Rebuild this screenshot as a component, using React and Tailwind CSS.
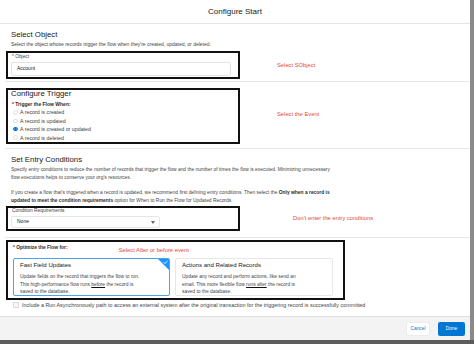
export default function App() {
  const font = { fontFamily: '"Liberation Sans", Arial, sans-serif' };
  const Radio = ({ checked, label }) => (
    <div className="flex items-center h-[8.4px] pl-[5px] gap-[2.5px]">
      <span
        className={
          "w-[4.5px] h-[4.5px] rounded-full border-[0.5px] flex items-center justify-center " +
          (checked ? "border-[#0176d3]" : "border-[#e0e0e0]")
        }
      >
        {checked && <span className="w-[2.5px] h-[2.5px] rounded-full bg-[#0176d3]" />}
      </span>
      <span className="text-[5.3px] leading-[8px] text-[#3e3e3c] whitespace-nowrap">{label}</span>
    </div>
  );
  return (
    <div className="w-[474px] h-[344px] bg-[#5c5c5c] overflow-hidden" style={font}>
      <div className="flex h-[340px]">
        <div className="w-[470px] bg-white flex flex-col">
          {/* header */}
          <div className="h-[24px] border-b border-[#e5e5e5] flex items-center justify-center text-[8px] text-[#181818]">
            Configure Start
          </div>

          <div className="flex-1 flex flex-col">
            {/* Section 1 */}
            <div className="pl-[6px] pt-[6px]">
              <div className="pl-[5px] text-[7.8px] leading-[10px] text-[#181818]">Select Object</div>
              <div className="pl-[5px] mt-[1px] text-[5px] leading-[7px] text-[#444] whitespace-nowrap">
                Select the object whose records trigger the flow when they're created, updated, or deleted.
              </div>
              <div className="flex items-center mt-[3px]">
                <div className="w-[234px] h-[28px] border-2 border-[#111] pl-[3px] pt-[1px]">
                  <div className="pl-[1px] text-[4.8px] leading-[6px] text-[#444]">
                    <span className="text-[#ba0517]">*</span> Object
                  </div>
                  <div className="mt-[2px] w-[220px] h-[14px] border-[0.5px] border-[#e3e3e3] rounded-[2px] pl-[5px] flex items-center text-[5px] text-[#181818]">
                    Account
                  </div>
                </div>
                <div className="ml-[37px] text-[5.8px] text-[#e4473c] whitespace-nowrap">Select SObject</div>
              </div>
            </div>
            <div className="ml-[5px] mt-[2px] h-px bg-[#e8e8e8]" />

            {/* Section 2 */}
            <div className="pl-[6px] mt-[6px] flex items-start">
              <div className="w-[234px] h-[56px] border-2 border-[#111] overflow-hidden">
                <div className="pl-[3px] text-[7.8px] leading-[7px] text-[#181818]">Configure Trigger</div>
                <div className="pl-[4px] mt-[4px] text-[5px] leading-[6px] text-[#2b2b2b] font-bold">
                  <span className="text-[#ba0517]">*</span> Trigger the Flow When:
                </div>
                <div className="mt-[1.2px]">
                  <Radio label="A record is created" />
                  <Radio label="A record is updated" />
                  <Radio checked label="A record is created or updated" />
                  <Radio label="A record is deleted" />
                </div>
              </div>
              <div className="ml-[37px] mt-[22px] text-[5.8px] text-[#e4473c] whitespace-nowrap">Select the Event</div>
            </div>
            <div className="ml-[5px] mt-[4px] h-px bg-[#e8e8e8]" />

            {/* Section 3 */}
            <div className="pl-[6px] mt-[6px]">
              <div className="pl-[5px] text-[7.8px] leading-[10px] text-[#181818]">Set Entry Conditions</div>
              <div className="pl-[5px] mt-[1px] text-[4.9px] leading-[8px] text-[#444] whitespace-nowrap">
                Specify entry conditions to reduce the number of records that trigger the flow and the number of times the flow is executed. Minimizing unnecessary
                <br />
                flow executions helps to conserve your org's resources.
              </div>
              <div className="pl-[5px] mt-[7px] text-[4.9px] leading-[8px] text-[#444] whitespace-nowrap">
                If you create a flow that's triggered when a record is updated, we recommend first defining entry conditions. Then select the{" "}
                <b className="text-[#2b2b2b]">Only when a record is</b>
                <br />
                <b className="text-[#2b2b2b]">updated to meet the condition requirements</b> option for When to Run the Flow for Updated Records.
              </div>
              <div className="flex items-center mt-[1px]">
                <div className="w-[234px] h-[25px] border-2 border-[#111] pl-[3px]">
                  <div className="pl-[1px] text-[4.9px] leading-[6px] text-[#444]">Condition Requirements</div>
                  <div className="mt-[2px] w-[149px] h-[12px] border-[0.5px] border-[#e6e6e6] rounded-[2px] pl-[5px] pr-[4px] flex items-center justify-between text-[5px] text-[#181818]">
                    <span>None</span>
                    <svg width="4" height="3" viewBox="0 0 4 3">
                      <path d="M0 0 L4 0 L2 3 Z" fill="#666" />
                    </svg>
                  </div>
                </div>
                <div className="ml-[53px] text-[5.8px] text-[#e4473c] whitespace-nowrap">Don't enter the entry conditions</div>
              </div>
            </div>
            <div className="ml-[5px] mt-[6px] h-px bg-[#e8e8e8]" />

            {/* Section 4 */}
            <div className="pl-[6px] mt-[2px]">
              <div className="w-[339px] h-[60px] border-2 border-[#111] pl-[5px] pt-[3px]">
                <div className="flex h-[8px]">
                  <div className="text-[4.9px] leading-[6px] text-[#2b2b2b] font-bold whitespace-nowrap">
                    <span className="text-[#ba0517]">*</span> Optimize the Flow for:
                  </div>
                  <div className="ml-[51px] mt-[1.5px] text-[5.8px] leading-[6px] text-[#e4473c] whitespace-nowrap">
                    Select After or before event
                  </div>
                </div>
                <div className="flex gap-[5px] mt-[5px]">
                  <div className="relative w-[157px] h-[38px] border border-[#4aa3ee] rounded-[2px] pl-[6px] pt-[3px] overflow-hidden">
                    <div className="text-[6.1px] leading-[6px] text-[#181818] whitespace-nowrap">Fast Field Updates</div>
                    <div className="mt-[5px] text-[4.9px] leading-[7.5px] text-[#444] whitespace-nowrap">
                      Update fields on the record that triggers the flow to run.
                      <br />
                      This high-performance flow runs{" "}
                      <span className="underline decoration-[#111] decoration-[1px] underline-offset-[1px]">before</span> the record is
                      <br />
                      saved to the database.
                    </div>
                    <svg className="absolute top-0 right-0" width="11" height="11" viewBox="0 0 11 11">
                      <path d="M0 0 H11 V11 Z" fill="#1b96ff" />
                      <path d="M5.6 3.2 L7 4.6 L9.6 1.8" stroke="#fff" strokeWidth="0.8" fill="none" />
                    </svg>
                  </div>
                  <div className="w-[158px] h-[38px] border border-[#e8e8e8] rounded-[2px] pl-[6px] pt-[3px]">
                    <div className="text-[6.1px] leading-[6px] text-[#181818] whitespace-nowrap">Actions and Related Records</div>
                    <div className="mt-[5px] text-[4.9px] leading-[7.5px] text-[#444] whitespace-nowrap">
                      Update any record and perform actions, like send an
                      <br />
                      email. This more flexible flow{" "}
                      <span className="underline decoration-[#111] decoration-[1px] underline-offset-[1px]">runs after</span> the record is
                      <br />
                      saved to the database.
                    </div>
                  </div>
                </div>
              </div>
              <div className="flex items-center mt-[2px] pl-[7px] h-[6px] gap-[3px]">
                <span className="w-[6px] h-[6px] border-[0.5px] border-[#d8d8d8] rounded-[1px] bg-[#f7f7f7]" />
                <span className="text-[5.4px] leading-[6px] text-[#444] whitespace-nowrap">
                  Include a Run Asynchronously path to access an external system after the original transaction for the triggering record is successfully committed
                </span>
              </div>
            </div>
          </div>

          {/* footer */}
          <div className="h-[24px] bg-[#f3f3f3] border-t border-[#e0e0e0] flex items-center justify-end pr-[5px] gap-[8px]">
            <div className="w-[24px] h-[14px] bg-white rounded-[2px] border-[0.5px] border-[#ececec] flex items-center justify-center text-[4.8px] text-[#0176d3]">
              Cancel
            </div>
            <div className="w-[27px] h-[14px] bg-[#0176d3] rounded-[2px] flex items-center justify-center text-[4.8px] text-white">
              Done
            </div>
          </div>
        </div>
        <div className="w-[4px] bg-[#8a8a8a]" />
      </div>
    </div>
  );
}
